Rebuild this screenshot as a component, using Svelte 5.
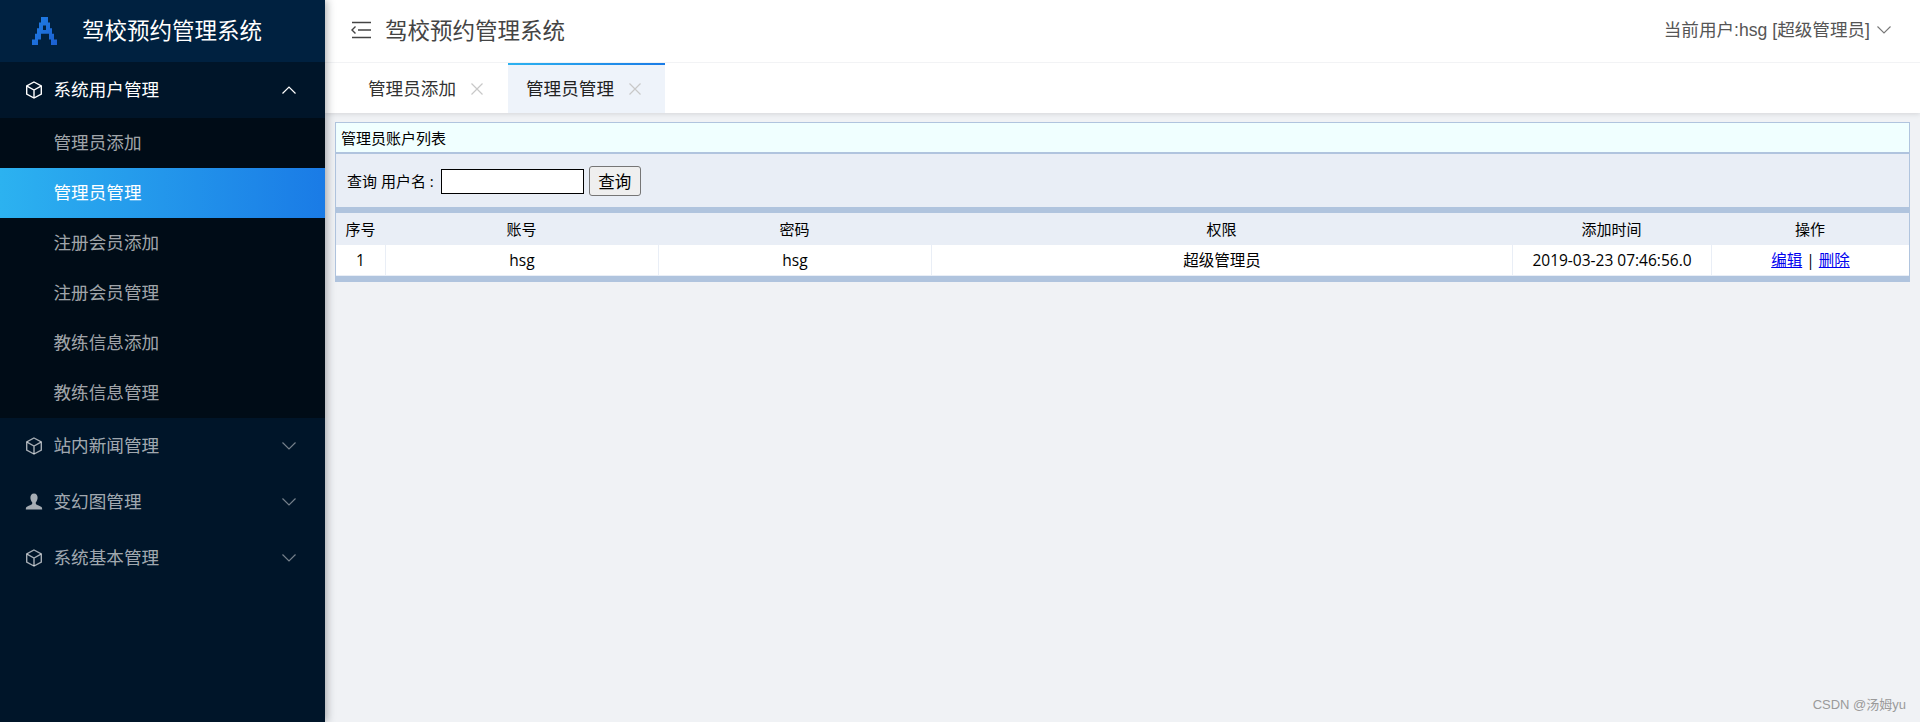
<script>
  const menus = [
    { name: '系统用户管理', icon: 'cube', open: true, subs: ['管理员添加', '管理员管理', '注册会员添加', '注册会员管理', '教练信息添加', '教练信息管理'] },
    { name: '站内新闻管理', icon: 'cube' },
    { name: '变幻图管理', icon: 'user' },
    { name: '系统基本管理', icon: 'cube' }
  ];
  const tabs = [
    { name: '管理员添加', active: false },
    { name: '管理员管理', active: true }
  ];
  const columns = ['序号', '账号', '密码', '权限', '添加时间', '操作'];
</script>

<div class="layout">
  <aside class="sidebar">
    <div class="logo">
      <svg class="logo-mark" width="26" height="30" viewBox="0 0 26 32" preserveAspectRatio="none">
        <defs>
          <linearGradient id="lg" x1="0" y1="0" x2="1" y2="1">
            <stop offset="0" stop-color="#1f7fe6" />
            <stop offset="1" stop-color="#1c5fd0" />
          </linearGradient>
        </defs>
        <path fill="url(#lg)" d="M9 1h7v6h2v6h2v6h2v6h3v6h-6v-6h-2v-6H9v6H6v6H0v-6h3v-6h2v-6h2V7h2zM11 10v5h3v-5z" />
      </svg>
      <span class="logo-text">驾校预约管理系统</span>
    </div>
    <nav>
      {#each menus as menu}
        <div class="menu-title" class:open={menu.open}>
          {#if menu.icon === 'cube'}
            <svg class="menu-icon" width="18" height="18" viewBox="0 0 18 18" fill="none" stroke="currentColor" stroke-width="1.4">
              <path d="M9 1l7.3 4v8L9 17l-7.3-4V5z" />
              <path d="M2 5.2L9 9l7-3.8M9 9v8" />
            </svg>
          {:else}
            <svg class="menu-icon" width="18" height="18" viewBox="0 0 18 18" fill="currentColor">
              <path d="M9 0.5c2.4 0 3.6 1.8 3.6 4.2 0 1.900-.8 3.500-1.800 4.500v1.600c0 1 3.500 1.700 5.700 3.200 .6.500.7 2 .7 2.500H.8c0-.5.1-2 .7-2.500 2.200-1.500 5.700-2.200 5.700-3.200V9.200C6.200 8.200 5.400 6.600 5.400 4.700 5.400 2.300 6.600.5 9 .5z" />
            </svg>
          {/if}
          <span class="menu-name">{menu.name}</span>
          <svg class="chevron" width="14" height="8" viewBox="0 0 14 8" fill="none" stroke="currentColor" stroke-width="1.2">
            {#if menu.open}
              <path d="M.5 7.500L7 1l6.500 6.500" />
            {:else}
              <path d="M.5.5L7 7l6.500-6.500" />
            {/if}
          </svg>
        </div>
        {#if menu.subs}
          <div class="submenu">
            {#each menu.subs as sub}
              <div class="sub-item" class:selected={sub === '管理员管理'}>{sub}</div>
            {/each}
          </div>
        {/if}
      {/each}
    </nav>
  </aside>

  <main class="main">
    <div class="top">
      <header class="topbar">
        <svg class="fold" width="20" height="18" viewBox="0 0 20 18" fill="none" stroke="#444" stroke-width="1.4">
          <path d="M1 1.500h19M7 9h13M1 16.500h19M4.500 5.500L1 9l3.500 3.500" />
        </svg>
        <span class="top-title">驾校预约管理系统</span>
        <span class="spacer"></span>
        <span class="user">当前用户:hsg [超级管理员]</span>
        <svg class="user-arrow" width="14" height="8" viewBox="0 0 14 8" fill="none" stroke="#777" stroke-width="1.100">
          <path d="M.5.5L7 7l6.500-6.500" />
        </svg>
      </header>
      <div class="tabs">
        {#each tabs as tab}
          <div class="tab" class:active={tab.active}>
            <span>{tab.name}</span>
            <svg width="12" height="12" viewBox="0 0 12 12" fill="none" stroke="#c8c8c8" stroke-width="1.200">
              <path d="M.5.5l11 11M11.500.5l-11 11" />
            </svg>
          </div>
        {/each}
      </div>
    </div>

    <div class="panel">
      <div class="panel-title">管理员账户列表</div>
      <form class="search" onsubmit={(e) => e.preventDefault()}>
        <label for="uname">查询 用户名 :</label>
        <input id="uname" type="text" />
        <button type="submit">查询</button>
      </form>
      <table>
        <colgroup>
          <col class="c1" /><col class="c2" /><col class="c3" /><col /><col class="c5" /><col class="c6" />
        </colgroup>
        <thead>
          <tr>
            {#each columns as col}
              <th>{col}</th>
            {/each}
          </tr>
        </thead>
        <tbody>
          <tr>
            <td>1</td>
            <td>hsg</td>
            <td>hsg</td>
            <td>超级管理员</td>
            <td>2019-03-23 07:46:56.0</td>
            <td><a href="#edit">编辑</a> | <a href="#del">删除</a></td>
          </tr>
        </tbody>
      </table>
    </div>
    <div class="watermark">CSDN @汤姆yu</div>
  </main>
</div>

<style>
  :global(body) {
    margin: 0;
    background: #f0f2f5;
  }

  .layout {
    display: flex;
    height: 722px;
    overflow: hidden;
    font-family: "Liberation Sans", "Noto Sans CJK SC", sans-serif;
  }

  .sidebar {
    width: 325px;
    flex: none;
    background: #001529;
    box-shadow: 2px 0 8px rgba(29, 35, 41, 0.35);
    position: relative;
    z-index: 2;
  }

  .logo {
    height: 62px;
    background: #002140;
    display: flex;
    align-items: center;
    padding-left: 32px;
    box-sizing: border-box;
  }

  .logo-mark {
    margin-right: 24px;
  }

  .logo-text {
    font-size: 22.5px;
    color: #fff;
    margin-bottom: 4px;
  }

  .menu-title {
    height: 56px;
    display: flex;
    align-items: center;
    padding: 0 29px 0 25px;
    color: rgba(255, 255, 255, 0.65);
    font-size: 17.6px;
  }

  .menu-title.open {
    color: #fff;
  }

  .menu-icon {
    width: 18px;
    flex: none;
    margin-right: 10.5px;
  }

  .menu-name {
    flex: 1;
    margin-bottom: 4px;
  }

  .chevron {
    opacity: 0.7;
  }

  .open .chevron {
    opacity: 1;
  }

  .submenu {
    background: #000c17;
  }

  .sub-item {
    height: 50px;
    line-height: 50px;
    padding-left: 53.5px;
    font-size: 17.6px;
    color: rgba(255, 255, 255, 0.65);
  }

  .sub-item.selected {
    color: #fff;
    background: linear-gradient(90deg, #2cb2f0, #1a7be6);
  }

  .main {
    flex: 1;
    min-width: 0;
    position: relative;
  }

  .top {
    background: #fff;
    box-shadow: 0 1px 5px rgba(0, 0, 0, 0.12);
  }

  .topbar {
    height: 63px;
    box-sizing: border-box;
    border-bottom: 1px solid #f2f3f5;
    display: flex;
    align-items: center;
    padding: 0 29px 2px 26px;
  }

  .fold {
    margin-right: 14px;
  }

  .top-title {
    font-size: 22.5px;
    color: #444;
    margin-bottom: 2px;
  }

  .spacer {
    flex: 1;
  }

  .user {
    font-size: 17.6px;
    color: #555;
    margin-right: 7px;
    margin-bottom: 4px;
  }

  .tabs {
    height: 50px;
    display: flex;
  }

  .tab {
    width: 157px;
    display: flex;
    align-items: center;
    box-sizing: border-box;
    padding: 0 0 3px 18px;
    gap: 15px;
    font-size: 17.6px;
    color: #333;
    border-top: 2px solid transparent;
  }

  .tab svg {
    margin-top: 3px;
  }

  .tab:first-child {
    width: 183px;
    padding-left: 43px;
  }

  .tab.active {
    background: #eef3fa;
    border-image: linear-gradient(90deg, #2cb2f0, #1a7be6) 1;
    color: #222;
  }

  .panel {
    margin: 9px 10px 0;
    font-size: 15px;
    color: #000;
    font-family: "Open Sans", "Noto Sans CJK SC", sans-serif;
  }

  .panel-title {
    height: 32px;
    line-height: 30px;
    box-sizing: border-box;
    padding-left: 5px;
    background: #f0ffff;
    border: 1px solid #b0c4de;
    border-bottom-width: 2px;
    font-size: 15px;
  }

  .search {
    height: 53px;
    box-sizing: border-box;
    background: #e9eef6;
    border: 1px solid #b0c4de;
    border-width: 0 1px;
    display: flex;
    align-items: center;
    padding-left: 11px;
    margin: 0;
  }

  .search label {
    font-size: 15px;
    margin-right: 7px;
  }

  .search input {
    width: 143px;
    height: 25px;
    box-sizing: border-box;
    border: 1px solid #000;
    background: #fff;
    padding: 0;
    margin: 1px 5px 0 0;
  }

  .search button {
    width: 52px;
    height: 30px;
    padding: 0;
    background: #efefef;
    border: 1px solid #767676;
    border-radius: 3px;
    font-size: 16.5px;
    font-family: inherit;
    color: #000;
  }

  table {
    width: 100%;
    table-layout: fixed;
    border-collapse: separate;
    border-spacing: 0;
    border: 1px solid #b0c4de;
    border-width: 6px 1px;
    box-sizing: border-box;
  }

  .c1 { width: 49px; }
  .c2 { width: 273px; }
  .c3 { width: 273px; }
  .c5 { width: 199px; }
  .c6 { width: 198px; }

  th {
    height: 32px;
    padding: 0 0 2px;
    box-sizing: border-box;
    background: #e9eef6;
    font-weight: 400;
    font-size: 15px;
  }

  td {
    height: 31px;
    padding: 0 0 1px;
    box-sizing: border-box;
    background: #fff;
    text-align: center;
    font-size: 15.5px;
    border-left: 1px solid #e9eef6;
    border-bottom: 1px solid #e9eef6;
  }

  td:first-child {
    border-left: 0;
  }

  a {
    color: #0000ee;
  }

  .watermark {
    position: absolute;
    right: 14px;
    bottom: 9px;
    font-size: 13px;
    color: #9a9a9a;
  }
</style>
